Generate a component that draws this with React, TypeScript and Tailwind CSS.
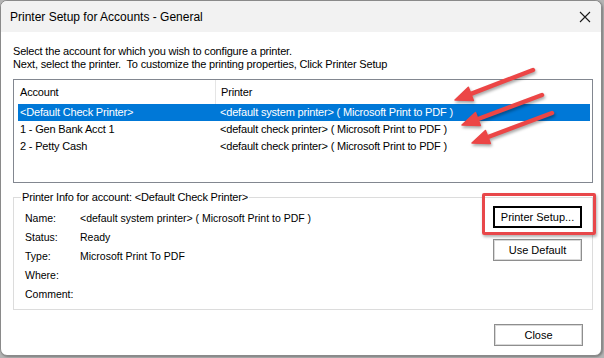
import React from 'react'

const font = { fontFamily: '"Liberation Sans", Arial, sans-serif' }

const rows = [
  { account: '<Default Check Printer>', printer: '<default system printer> ( Microsoft Print to PDF )', selected: true },
  { account: '1 - Gen Bank Acct 1', printer: '<default check printer> ( Microsoft Print to PDF )', selected: false },
  { account: '2 - Petty Cash', printer: '<default check printer> ( Microsoft Print to PDF )', selected: false },
]

const info = [
  ['Name:', '<default system printer> ( Microsoft Print to PDF )'],
  ['Status:', 'Ready'],
  ['Type:', 'Microsoft Print To PDF'],
  ['Where:', ''],
  ['Comment:', ''],
]

// callout arrows drawn on top of the screenshot
const arrows = [
  { from: [533, 70], to: [455, 100] },
  { from: [542, 95], to: [462, 125] },
  { from: [552, 113], to: [472, 143] },
]

function Arrow({ from, to }: { from: number[]; to: number[] }) {
  const dx = to[0] - from[0]
  const dy = to[1] - from[1]
  const len = Math.hypot(dx, dy)
  const ux = dx / len
  const uy = dy / len
  const headLen = 17
  const half = 7
  const bx = to[0] - ux * headLen
  const by = to[1] - uy * headLen
  const nx = -uy * half
  const ny = ux * half
  const pts = `${to[0]},${to[1]} ${bx + nx},${by + ny} ${bx - nx},${by - ny}`
  return (
    <g>
      <line x1={from[0]} y1={from[1]} x2={bx + ux * 2} y2={by + uy * 2} stroke="#ec4646" strokeWidth="4.5" strokeLinecap="round" />
      <polygon points={pts} fill="#ec4646" stroke="#ec4646" strokeWidth="1.5" strokeLinejoin="round" />
    </g>
  )
}

function Button({ children, primary }: { children: React.ReactNode; primary?: boolean }) {
  return (
    <div
      className={`w-[89px] h-[22px] flex items-center justify-center bg-white text-[11px] text-black ${
        primary ? 'border-2 border-black' : 'border border-[#8e8e8e] shadow-[inset_0_0_0_1px_#d9d9d9]'
      }`}
    >
      {children}
    </div>
  )
}

export default function App() {
  return (
    <div className="w-[604px] h-[358px] bg-[#b4b4b4] relative overflow-hidden" style={font}>
      <div className="w-[602px] h-[356px] bg-white border border-[#8a8a8a] rounded-[7px] overflow-hidden flex flex-col shadow-[1px_1px_2px_rgba(0,0,0,0.3)]">
        {/* title bar */}
        <div className="h-[31px] shrink-0 bg-[#f2f2f2] flex items-center justify-between pl-[9px] pr-[9px]">
          <span className="text-[12px] text-black">Printer Setup for Accounts - General</span>
          <svg width="12" height="12" viewBox="0 0 12 12" className="mr-[1px]">
            <path d="M1 1 L11 11 M11 1 L1 11" stroke="#1a1a1a" strokeWidth="1.1" />
          </svg>
        </div>

        <div className="pl-[12px] pr-[8px] flex flex-col text-[11px] tracking-[-0.18px] text-black">
          <div className="mt-[13px] leading-[13px]">
            <div>Select the account for which you wish to configure a printer.</div>
            <div className="whitespace-pre">Next, select the printer.  To customize the printing properties, Click Printer Setup</div>
          </div>

          {/* account list */}
          <div className="mt-[8px] h-[104px] border border-[#828790] flex flex-col">
            <div className="h-[24px] shrink-0 flex items-stretch">
              <div className="w-[201px] pl-[6px] flex items-center">Account</div>
              <div className="w-px bg-[#e5e5e5]" />
              <div className="pl-[5px] flex items-center">Printer</div>
            </div>
            {rows.map((r) => (
              <div
                key={r.account}
                className={`h-[17px] ml-[4px] mr-[2px] flex items-center ${r.selected ? 'bg-[#0078d7] text-white' : ''}`}
              >
                <div className="w-[202px] pl-[2px] whitespace-nowrap">{r.account}</div>
                <div className="whitespace-nowrap">{r.printer}</div>
              </div>
            ))}
          </div>

          {/* printer info group */}
          <fieldset className="mt-[8px] h-[119px] border border-[#dcdcdc] pl-[11px] pr-[10px] flex">
            <legend className="ml-[-4px] px-[1px] leading-[13px]">Printer Info for account: &lt;Default Check Printer&gt;</legend>
            <div className="flex w-full justify-between">
              <div className="pt-[5px] flex flex-col text-[10.5px] tracking-normal">
                {info.map(([label, value]) => (
                  <div key={label} className="h-[19.2px] flex items-center">
                    <div className="w-[55px]">{label}</div>
                    <div className="whitespace-nowrap">{value}</div>
                  </div>
                ))}
              </div>
              <div className="pt-[2px] flex flex-col gap-[11px] tracking-normal">
                <div className="relative">
                  <Button primary>Printer Setup...</Button>
                  <div className="absolute left-[-11px] top-[-13px] w-[114px] h-[42px] border-[3px] border-[#e8474a] rounded-[2px] shadow-[1px_2px_3px_rgba(0,0,0,0.3)]" />
                </div>
                <Button>Use Default</Button>
              </div>
            </div>
          </fieldset>

          <div className="mt-[14px] flex justify-end pr-[10px] tracking-normal">
            <Button>Close</Button>
          </div>
        </div>
      </div>

      <svg className="absolute inset-0 pointer-events-none drop-shadow-[1px_2px_1.5px_rgba(0,0,0,0.35)]" width="604" height="358">
        {arrows.map((a, i) => (
          <Arrow key={i} from={a.from} to={a.to} />
        ))}
      </svg>
    </div>
  )
}
